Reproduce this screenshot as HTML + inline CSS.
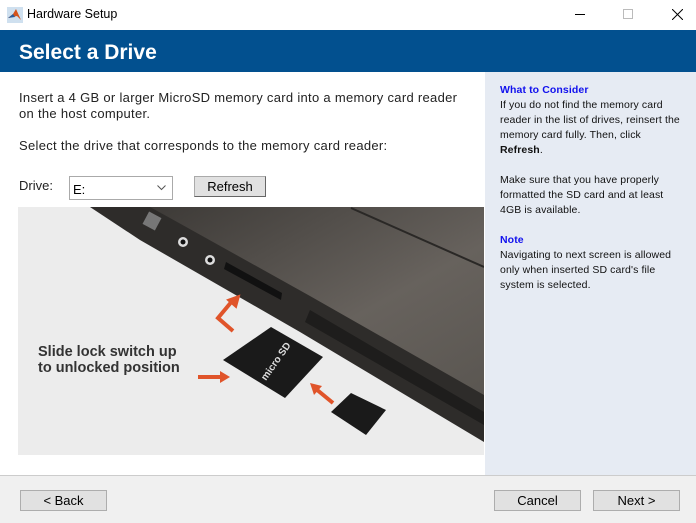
<!DOCTYPE html>
<html><head><meta charset="utf-8"><style>
*{margin:0;padding:0;box-sizing:border-box}
body{width:696px;height:523px;overflow:hidden;background:#fff;font-family:"Liberation Sans",Arial,sans-serif;position:relative;color:#000}
.abs{position:absolute}
.btn{position:absolute;background:#e1e1e1;border:1px solid #adadad;font-size:13px;text-align:center;line-height:19px}
.rp div{white-space:nowrap}
</style></head><body>
<div class="abs" style="left:0;top:0;width:696px;height:30px;background:#fff"></div>
<svg class="abs" style="left:7px;top:7px" width="16" height="16" viewBox="0 0 16 16"><rect x="0" y="0" width="16" height="16" fill="#cfe0ef"/><path d="M1 11 L6 7 L9 2 L14 13 L10 9 Z" fill="#d4531c"/><path d="M1 11 L6 7 L8 10 Z" fill="#2a5d9c"/></svg>
<div class="abs" style="left:27px;top:7px;font-size:12.5px">Hardware Setup</div>
<div class="abs" style="left:575px;top:14px;width:10px;height:1px;background:#000"></div>
<div class="abs" style="left:623px;top:9px;width:10px;height:10px;border:1px solid #bbb"></div>
<svg class="abs" style="left:672px;top:9px" width="11" height="11"><path d="M0 0L11 11M11 0L0 11" stroke="#000" stroke-width="1"/></svg>
<div class="abs" style="left:0;top:30px;width:696px;height:42px;background:#02508f"></div>
<div class="abs" style="left:19px;top:41px;color:#fff;font-size:21px;font-weight:bold">Select a Drive</div>
<div class="abs" style="left:485px;top:72px;width:211px;height:403px;background:#e6ebf3"></div>
<div class="abs rp" style="left:500px;top:83px;width:190px;font-size:10.5px;line-height:15px;color:#111;letter-spacing:0.1px">
<div style="color:#1111ee;font-weight:bold">What to Consider</div>
<div>If you do not find the memory card</div>
<div>reader in the list of drives, reinsert the</div>
<div>memory card fully. Then, click</div>
<div><b>Refresh</b>.</div>
<div style="height:15px"></div>
<div>Make sure that you have properly</div>
<div>formatted the SD card and at least</div>
<div>4GB is available.</div>
<div style="height:15px"></div>
<div style="color:#1111ee;font-weight:bold">Note</div>
<div>Navigating to next screen is allowed</div>
<div>only when inserted SD card's file</div>
<div>system is selected.</div>
</div>
<div class="abs" style="left:19px;top:90px;font-size:13px;line-height:16px;color:#222;white-space:nowrap;letter-spacing:0.3px">Insert a 4 GB or larger MicroSD memory card into a memory card reader<br>on the host computer.</div>
<div class="abs" style="left:19px;top:138px;font-size:13px;color:#222;white-space:nowrap;letter-spacing:0.3px">Select the drive that corresponds to the memory card reader:</div>
<div class="abs" style="left:19px;top:178px;font-size:13px;color:#222">Drive:</div>
<div class="abs" style="left:69px;top:176px;width:104px;height:24px;border:1px solid #aaa;background:#fff;font-size:13px;padding:5px 3px">E:</div>
<svg class="abs" style="left:157px;top:185px" width="9" height="6"><path d="M0.5 0.5L4.5 4.5L8.5 0.5" stroke="#555" fill="none"/></svg>
<div class="btn" style="left:194px;top:176px;width:72px;height:21px;border-color:#aaa;border-right-color:#666;border-bottom-color:#666">Refresh</div>
<svg class="abs" style="left:18px;top:207px" width="466" height="248" viewBox="18 207 466 248">
<defs><linearGradient id="g" x1="0" y1="0" x2="1" y2="1"><stop offset="0" stop-color="#3d3a37"/><stop offset="0.6" stop-color="#67625d"/><stop offset="1" stop-color="#5a5651"/></linearGradient></defs>
<rect x="18" y="207" width="466" height="248" fill="#ececec"/>
<path d="M90 207 L484 207 L484 442 L300 332 L140 240 Z" fill="#2e2c2a"/>
<path d="M150 207 L484 207 L484 395 L310 296 L170 218 Z" fill="url(#g)"/>
<path d="M351 208 L484 267" stroke="#2a2826" stroke-width="2"/>
<path d="M310 310 L484 412 L484 425 L305 322 Z" fill="#1e1d1c"/>
<path d="M226 262 L282 293 L281 300 L224 269 Z" fill="#111"/>
<rect x="145" y="214" width="14" height="14" fill="#777" transform="rotate(28 152 221)"/>
<circle cx="183" cy="242" r="5" fill="#ddd"/><circle cx="183" cy="242" r="2.5" fill="#111"/>
<circle cx="210" cy="260" r="5" fill="#ddd"/><circle cx="210" cy="260" r="2.5" fill="#111"/>
<path d="M223 360 L271 327 L323 357 L285 398 Z" fill="#1a1a1a"/>
<text x="258" y="378" font-size="10" fill="#ddd" font-weight="bold" transform="rotate(-55 265 372)">micro SD</text>
<path d="M331 412 L351 393 L386 410 L366 435 Z" fill="#1a1a1a"/>
<text x="38" y="356" font-size="14.5" font-weight="bold" fill="#333">Slide lock switch up</text>
<text x="38" y="372" font-size="14.5" font-weight="bold" fill="#333">to unlocked position</text>
<path d="M233 331 L218 318 L233 300" stroke="#e0542a" stroke-width="4" fill="none"/>
<path d="M228 300 L239 296 L236 307 Z" fill="#e0542a" stroke="#e0542a" stroke-width="2"/>
<path d="M198 377 L222 377" stroke="#e0542a" stroke-width="4"/>
<path d="M220 371 L230 377 L220 383 Z" fill="#e0542a"/>
<path d="M333 403 L316 389" stroke="#e0542a" stroke-width="4"/>
<path d="M310 383 L322 386 L314 395 Z" fill="#e0542a"/>
</svg>
<div class="abs" style="left:0;top:475px;width:696px;height:48px;background:#f0f0f0;border-top:1px solid #ccc"></div>
<div class="btn" style="left:20px;top:490px;width:87px;height:21px">&lt; Back</div>
<div class="btn" style="left:494px;top:490px;width:87px;height:21px">Cancel</div>
<div class="btn" style="left:593px;top:490px;width:87px;height:21px">Next &gt;</div>
</body></html>
